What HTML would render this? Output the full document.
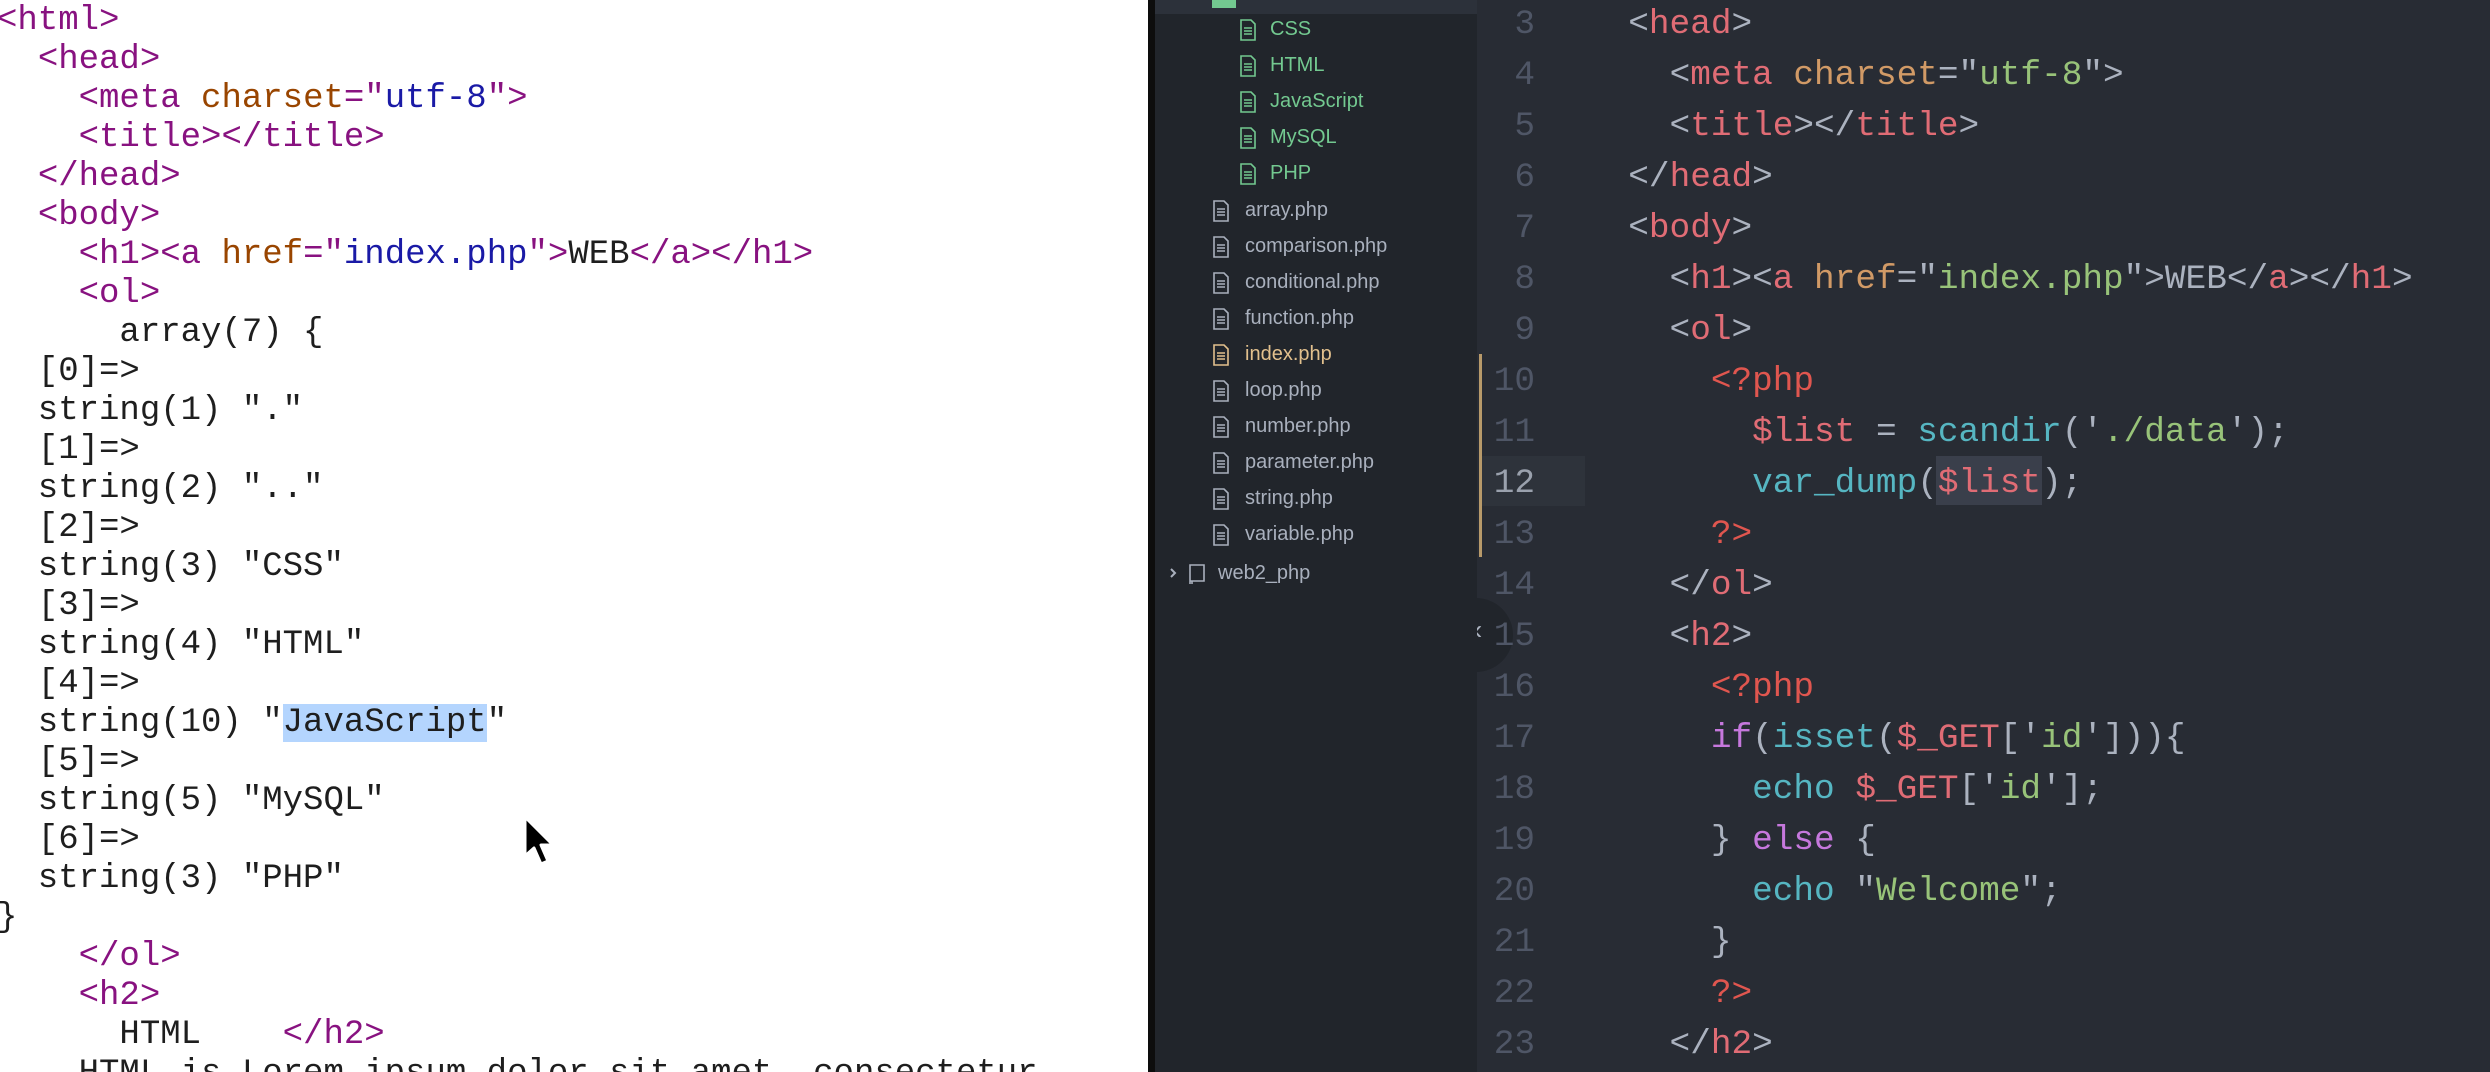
<!DOCTYPE html>
<html><head><meta charset="utf-8"><style>
*{margin:0;padding:0;box-sizing:border-box}
body{width:2490px;height:1072px;overflow:hidden;position:relative;background:#fff;font-family:"Liberation Mono",monospace}
#left{position:absolute;left:0;top:0;width:1148px;height:1072px;background:#fff;overflow:hidden}
#left .l{position:absolute;left:-3px;height:39px;line-height:39px;font-size:34px;white-space:pre;color:#1e1e1e;margin-top:2px}
.t{color:#881280}.a{color:#994500}.v{color:#1a1aa6}
.hl{background:#b4d5fe}
#div{position:absolute;left:1148px;top:0;width:7px;height:1072px;background:#0d0d0d}
#side{position:absolute;left:1155px;top:0;width:322px;height:1072px;background:#21252b;font-family:"Liberation Sans",sans-serif;font-size:20px}
.si{position:absolute;height:36px;line-height:36px;white-space:pre}
.si svg{position:absolute;top:8px}
#ed{position:absolute;left:1477px;top:0;width:1013px;height:1072px;background:#282c34;overflow:hidden}
.r{position:absolute;height:51px;line-height:51px;font-size:34.4px;white-space:pre;color:#abb2bf}
.n{position:absolute;width:80px;text-align:right;height:51px;line-height:51px;font-size:34.4px;color:#4f5666}
.p{color:#abb2bf}.g{color:#e06c75}.o{color:#d19a66}.s{color:#98c379}.c{color:#56b6c2}.k{color:#c678dd}.ph{color:#e0564f}
</style></head><body>
<div id="left">
<div class="l" style="top:0"><span class="t">&lt;html&gt;</span></div>
<div class="l" style="top:39px">  <span class="t">&lt;head&gt;</span></div>
<div class="l" style="top:78px">    <span class="t">&lt;meta </span><span class="a">charset</span><span class="t">="</span><span class="v">utf-8</span><span class="t">"&gt;</span></div>
<div class="l" style="top:117px">    <span class="t">&lt;title&gt;&lt;/title&gt;</span></div>
<div class="l" style="top:156px">  <span class="t">&lt;/head&gt;</span></div>
<div class="l" style="top:195px">  <span class="t">&lt;body&gt;</span></div>
<div class="l" style="top:234px">    <span class="t">&lt;h1&gt;&lt;a </span><span class="a">href</span><span class="t">="</span><span class="v">index.php</span><span class="t">"&gt;</span>WEB<span class="t">&lt;/a&gt;&lt;/h1&gt;</span></div>
<div class="l" style="top:273px">    <span class="t">&lt;ol&gt;</span></div>
<div class="l" style="top:312px">      array(7) {</div>
<div class="l" style="top:351px">  [0]=&gt;</div>
<div class="l" style="top:390px">  string(1) "."</div>
<div class="l" style="top:429px">  [1]=&gt;</div>
<div class="l" style="top:468px">  string(2) ".."</div>
<div class="l" style="top:507px">  [2]=&gt;</div>
<div class="l" style="top:546px">  string(3) "CSS"</div>
<div class="l" style="top:585px">  [3]=&gt;</div>
<div class="l" style="top:624px">  string(4) "HTML"</div>
<div class="l" style="top:663px">  [4]=&gt;</div>
<div class="l" style="top:702px">  string(10) "<span class="hl">JavaScript</span>"</div>
<div class="l" style="top:741px">  [5]=&gt;</div>
<div class="l" style="top:780px">  string(5) "MySQL"</div>
<div class="l" style="top:819px">  [6]=&gt;</div>
<div class="l" style="top:858px">  string(3) "PHP"</div>
<div class="l" style="top:897px">}</div>
<div class="l" style="top:936px">    <span class="t">&lt;/ol&gt;</span></div>
<div class="l" style="top:975px">    <span class="t">&lt;h2&gt;</span></div>
<div class="l" style="top:1014px">      HTML    <span class="t">&lt;/h2&gt;</span></div>
<div class="l" style="top:1053px">    HTML is Lorem ipsum dolor sit amet, consectetur</div>
<svg style="position:absolute;left:522px;top:814px" width="36" height="54" viewBox="0 0 36 54"><path d="M3 3 L3 42 L12 34 L19 50 L26 47 L19 31 L31 31 Z" fill="#000" stroke="#fff" stroke-width="3" stroke-linejoin="round"/></svg>
</div>
<div id="div"></div>
<div id="side">
<div style="position:absolute;left:0;top:0;width:322px;height:14px;background:#2c313a"></div>
<div style="position:absolute;left:57px;top:0;width:24px;height:8px;background:#73c990"></div>
<div class="si" style="left:84px;top:11px;color:#73c990"><svg width="18" height="22" viewBox="0 0 18 22" style="left:0"><path d="M2 1h10l4 4v16H2z M5 9h8 M5 12h8 M5 15h8" fill="none" stroke="#73c990" stroke-width="1.6"/></svg><span style="margin-left:31px">CSS</span></div>
<div class="si" style="left:84px;top:47px;color:#73c990"><svg width="18" height="22" viewBox="0 0 18 22" style="left:0"><path d="M2 1h10l4 4v16H2z M5 9h8 M5 12h8 M5 15h8" fill="none" stroke="#73c990" stroke-width="1.6"/></svg><span style="margin-left:31px">HTML</span></div>
<div class="si" style="left:84px;top:83px;color:#73c990"><svg width="18" height="22" viewBox="0 0 18 22" style="left:0"><path d="M2 1h10l4 4v16H2z M5 9h8 M5 12h8 M5 15h8" fill="none" stroke="#73c990" stroke-width="1.6"/></svg><span style="margin-left:31px">JavaScript</span></div>
<div class="si" style="left:84px;top:119px;color:#73c990"><svg width="18" height="22" viewBox="0 0 18 22" style="left:0"><path d="M2 1h10l4 4v16H2z M5 9h8 M5 12h8 M5 15h8" fill="none" stroke="#73c990" stroke-width="1.6"/></svg><span style="margin-left:31px">MySQL</span></div>
<div class="si" style="left:84px;top:155px;color:#73c990"><svg width="18" height="22" viewBox="0 0 18 22" style="left:0"><path d="M2 1h10l4 4v16H2z M5 9h8 M5 12h8 M5 15h8" fill="none" stroke="#73c990" stroke-width="1.6"/></svg><span style="margin-left:31px">PHP</span></div>
<div class="si" style="left:57px;top:192px;color:#a9b0bd"><svg width="18" height="22" viewBox="0 0 18 22" style="left:0"><path d="M2 1h10l4 4v16H2z M5 9h8 M5 12h8 M5 15h8" fill="none" stroke="#a9b0bd" stroke-width="1.6"/></svg><span style="margin-left:33px">array.php</span></div>
<div class="si" style="left:57px;top:228px;color:#a9b0bd"><svg width="18" height="22" viewBox="0 0 18 22" style="left:0"><path d="M2 1h10l4 4v16H2z M5 9h8 M5 12h8 M5 15h8" fill="none" stroke="#a9b0bd" stroke-width="1.6"/></svg><span style="margin-left:33px">comparison.php</span></div>
<div class="si" style="left:57px;top:264px;color:#a9b0bd"><svg width="18" height="22" viewBox="0 0 18 22" style="left:0"><path d="M2 1h10l4 4v16H2z M5 9h8 M5 12h8 M5 15h8" fill="none" stroke="#a9b0bd" stroke-width="1.6"/></svg><span style="margin-left:33px">conditional.php</span></div>
<div class="si" style="left:57px;top:300px;color:#a9b0bd"><svg width="18" height="22" viewBox="0 0 18 22" style="left:0"><path d="M2 1h10l4 4v16H2z M5 9h8 M5 12h8 M5 15h8" fill="none" stroke="#a9b0bd" stroke-width="1.6"/></svg><span style="margin-left:33px">function.php</span></div>
<div class="si" style="left:57px;top:336px;color:#e2c08d"><svg width="18" height="22" viewBox="0 0 18 22" style="left:0"><path d="M2 1h10l4 4v16H2z M5 9h8 M5 12h8 M5 15h8" fill="none" stroke="#e2c08d" stroke-width="1.6"/></svg><span style="margin-left:33px">index.php</span></div>
<div class="si" style="left:57px;top:372px;color:#a9b0bd"><svg width="18" height="22" viewBox="0 0 18 22" style="left:0"><path d="M2 1h10l4 4v16H2z M5 9h8 M5 12h8 M5 15h8" fill="none" stroke="#a9b0bd" stroke-width="1.6"/></svg><span style="margin-left:33px">loop.php</span></div>
<div class="si" style="left:57px;top:408px;color:#a9b0bd"><svg width="18" height="22" viewBox="0 0 18 22" style="left:0"><path d="M2 1h10l4 4v16H2z M5 9h8 M5 12h8 M5 15h8" fill="none" stroke="#a9b0bd" stroke-width="1.6"/></svg><span style="margin-left:33px">number.php</span></div>
<div class="si" style="left:57px;top:444px;color:#a9b0bd"><svg width="18" height="22" viewBox="0 0 18 22" style="left:0"><path d="M2 1h10l4 4v16H2z M5 9h8 M5 12h8 M5 15h8" fill="none" stroke="#a9b0bd" stroke-width="1.6"/></svg><span style="margin-left:33px">parameter.php</span></div>
<div class="si" style="left:57px;top:480px;color:#a9b0bd"><svg width="18" height="22" viewBox="0 0 18 22" style="left:0"><path d="M2 1h10l4 4v16H2z M5 9h8 M5 12h8 M5 15h8" fill="none" stroke="#a9b0bd" stroke-width="1.6"/></svg><span style="margin-left:33px">string.php</span></div>
<div class="si" style="left:57px;top:516px;color:#a9b0bd"><svg width="18" height="22" viewBox="0 0 18 22" style="left:0"><path d="M2 1h10l4 4v16H2z M5 9h8 M5 12h8 M5 15h8" fill="none" stroke="#a9b0bd" stroke-width="1.6"/></svg><span style="margin-left:33px">variable.php</span></div>
<div class="si" style="left:13px;top:555px;color:#a9b0bd"><svg width="44" height="22" viewBox="0 0 44 22" style="left:0"><path d="M3 6l4 4-4 4" fill="none" stroke="#a9b0bd" stroke-width="2"/><path d="M22 2h14v16H22z M24 18v3 M22 2v19" fill="none" stroke="#a9b0bd" stroke-width="1.6"/></svg><span style="margin-left:50px">web2_php</span></div>
</div>
<div id="ed">
<div style="position:absolute;left:2px;top:354px;width:3px;height:203px;background:#b89a6a"></div>
<div style="position:absolute;left:5px;top:456px;width:103px;height:50px;background:#2e333b"></div>
<div style="position:absolute;left:459px;top:456px;width:106px;height:49px;background:#3a3f4b"></div>
<div style="position:absolute;left:-38px;top:598px;width:74px;height:74px;border-radius:50%;background:#21252b"></div>
<div style="position:absolute;left:-4px;top:614px;color:#abb2bf;font-family:'Liberation Sans',sans-serif;font-size:28px">‹</div>
<div class="n" style="left:-22px;top:-1px">3</div><div class="r" style="left:110px;top:-1px">  <span class="p">&lt;</span><span class="g">head</span><span class="p">&gt;</span></div>
<div class="n" style="left:-22px;top:50px">4</div><div class="r" style="left:110px;top:50px">    <span class="p">&lt;</span><span class="g">meta</span> <span class="o">charset</span>="<span class="s">utf-8</span>"&gt;</div>
<div class="n" style="left:-22px;top:101px">5</div><div class="r" style="left:110px;top:101px">    &lt;<span class="g">title</span>&gt;&lt;/<span class="g">title</span>&gt;</div>
<div class="n" style="left:-22px;top:152px">6</div><div class="r" style="left:110px;top:152px">  &lt;/<span class="g">head</span>&gt;</div>
<div class="n" style="left:-22px;top:203px">7</div><div class="r" style="left:110px;top:203px">  &lt;<span class="g">body</span>&gt;</div>
<div class="n" style="left:-22px;top:254px">8</div><div class="r" style="left:110px;top:254px">    &lt;<span class="g">h1</span>&gt;&lt;<span class="g">a</span> <span class="o">href</span>="<span class="s">index.php</span>"&gt;WEB&lt;/<span class="g">a</span>&gt;&lt;/<span class="g">h1</span>&gt;</div>
<div class="n" style="left:-22px;top:305px">9</div><div class="r" style="left:110px;top:305px">    &lt;<span class="g">ol</span>&gt;</div>
<div class="n" style="left:-22px;top:356px">10</div><div class="r" style="left:110px;top:356px">      <span class="ph">&lt;?php</span></div>
<div class="n" style="left:-22px;top:407px">11</div><div class="r" style="left:110px;top:407px">        <span class="g">$list</span> = <span class="c">scandir</span>('<span class="s">./data</span>');</div>
<div class="n" style="left:-22px;top:458px;color:#9aa1ad">12</div><div class="r" style="left:110px;top:458px">        <span class="c">var_dump</span>(<span class="g">$list</span>);</div>
<div class="n" style="left:-22px;top:509px">13</div><div class="r" style="left:110px;top:509px">      <span class="ph">?&gt;</span></div>
<div class="n" style="left:-22px;top:560px">14</div><div class="r" style="left:110px;top:560px">    &lt;/<span class="g">ol</span>&gt;</div>
<div class="n" style="left:-22px;top:611px">15</div><div class="r" style="left:110px;top:611px">    &lt;<span class="g">h2</span>&gt;</div>
<div class="n" style="left:-22px;top:662px">16</div><div class="r" style="left:110px;top:662px">      <span class="ph">&lt;?php</span></div>
<div class="n" style="left:-22px;top:713px">17</div><div class="r" style="left:110px;top:713px">      <span class="k">if</span>(<span class="c">isset</span>(<span class="g">$_GET</span>['<span class="s">id</span>'])){</div>
<div class="n" style="left:-22px;top:764px">18</div><div class="r" style="left:110px;top:764px">        <span class="c">echo</span> <span class="g">$_GET</span>['<span class="s">id</span>'];</div>
<div class="n" style="left:-22px;top:815px">19</div><div class="r" style="left:110px;top:815px">      } <span class="k">else</span> {</div>
<div class="n" style="left:-22px;top:866px">20</div><div class="r" style="left:110px;top:866px">        <span class="c">echo</span> "<span class="s">Welcome</span>";</div>
<div class="n" style="left:-22px;top:917px">21</div><div class="r" style="left:110px;top:917px">      }</div>
<div class="n" style="left:-22px;top:968px">22</div><div class="r" style="left:110px;top:968px">      <span class="ph">?&gt;</span></div>
<div class="n" style="left:-22px;top:1019px">23</div><div class="r" style="left:110px;top:1019px">    &lt;/<span class="g">h2</span>&gt;</div>
</div>
</body></html>
